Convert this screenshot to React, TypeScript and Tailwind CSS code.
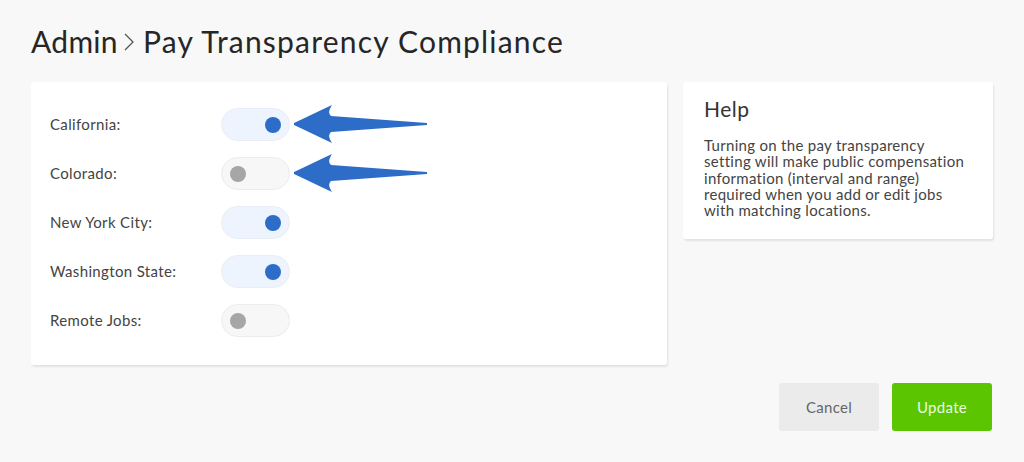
import { useState } from 'react';

const initialRegions = [
  { id: 'ca', label: 'California:', on: true, arrow: true },
  { id: 'co', label: 'Colorado:', on: false, arrow: true },
  { id: 'nyc', label: 'New York City:', on: true, arrow: false },
  { id: 'wa', label: 'Washington State:', on: true, arrow: false },
  { id: 'remote', label: 'Remote Jobs:', on: false, arrow: false },
];

function Arrow() {
  return (
    <svg width="136" height="40" viewBox="0 0 136 40" className="shrink-0">
      <path
        d="M1 18 C14 12 26 6 39 0 C36 5 35 8 38 11 L134 18 L134 20 L38 27 C35 30 36 33 39 38 C26 32 14 26 1 20 Z"
        fill="#2d6cc7"
      />
    </svg>
  );
}

function Toggle({ on, onClick }: { on: boolean; onClick: () => void }) {
  return (
    <button
      onClick={onClick}
      className={`flex h-[33px] w-[69px] shrink-0 items-center rounded-full border px-[8px] ${
        on ? 'justify-end border-[#e9eef6] bg-[#eef4fd]' : 'justify-start border-[#ececec] bg-[#f7f7f7]'
      }`}
    >
      <span className={`h-[16px] w-[16px] rounded-full ${on ? 'bg-[#2d6cc7]' : 'bg-[#a6a6a6]'}`} />
    </button>
  );
}

export default function App() {
  const [regions, setRegions] = useState(initialRegions);

  const toggle = (id: string) =>
    setRegions(rs => rs.map(r => (r.id === id ? { ...r, on: !r.on } : r)));

  return (
    <div className="h-[462px] w-[1024px] overflow-hidden bg-[#f8f8f8] px-[31px] pt-[22px] text-[#3a3a3a]" style={{ fontFamily: 'Lato, "Open Sans", sans-serif' }}>
      <h1 className="flex items-center text-[30px] leading-[38px] text-[#262626]">
        <span className="tracking-[0.3px]">Admin</span>
        <svg width="12" height="22" viewBox="0 0 12 22" className="ml-[5px] mr-[8px] mt-[2px]">
          <path d="M2 3 L10 11 L2 19" fill="none" stroke="#555" strokeWidth="1.3" />
        </svg>
        <span className="tracking-[1.2px]">Pay Transparency Compliance</span>
      </h1>

      <div className="mt-[22px] flex items-start gap-[16px]">
        <div className="w-[636px] rounded-[3px] bg-white pb-[28px] pl-[19px] pt-[26px] shadow-[1px_2px_2px_rgba(0,0,0,0.09)]">
          <div className="flex flex-col gap-[16px]">
            {regions.map(r => (
              <div key={r.id} className="flex h-[33px] items-center">
                <span className="w-[171px] text-[15px] tracking-[0.35px] text-[#444]">{r.label}</span>
                <Toggle on={r.on} onClick={() => toggle(r.id)} />
                {r.arrow && (
                  <div className="ml-[3px] mt-[1px]">
                    <Arrow />
                  </div>
                )}
              </div>
            ))}
          </div>
        </div>

        <div className="w-[310px] rounded-[3px] bg-white px-[21px] pb-[21px] pt-[13px] shadow-[1px_2px_2px_rgba(0,0,0,0.09)]">
          <h2 className="text-[21px] leading-[28px] tracking-[0.5px] text-[#333]">Help</h2>
          <p className="mt-[14px] text-[15px] leading-[16.3px] tracking-[0.3px] text-[#444]">
            Turning on the pay transparency
            <br />
            setting will make public compensation
            <br />
            information (interval and range)
            <br />
            required when you add or edit jobs
            <br />
            with matching locations.
          </p>
        </div>
      </div>

      <div className="mt-[18px] flex justify-end gap-[13px] pr-[1px]">
        <button className="h-[48px] w-[100px] rounded-[3px] bg-[#ebebeb] text-[15px] tracking-[0.3px] text-[#666]">Cancel</button>
        <button className="h-[48px] w-[100px] rounded-[3px] bg-[#5ac500] text-[15px] tracking-[0.3px] text-[#eafbe0]">Update</button>
      </div>
    </div>
  );
}
